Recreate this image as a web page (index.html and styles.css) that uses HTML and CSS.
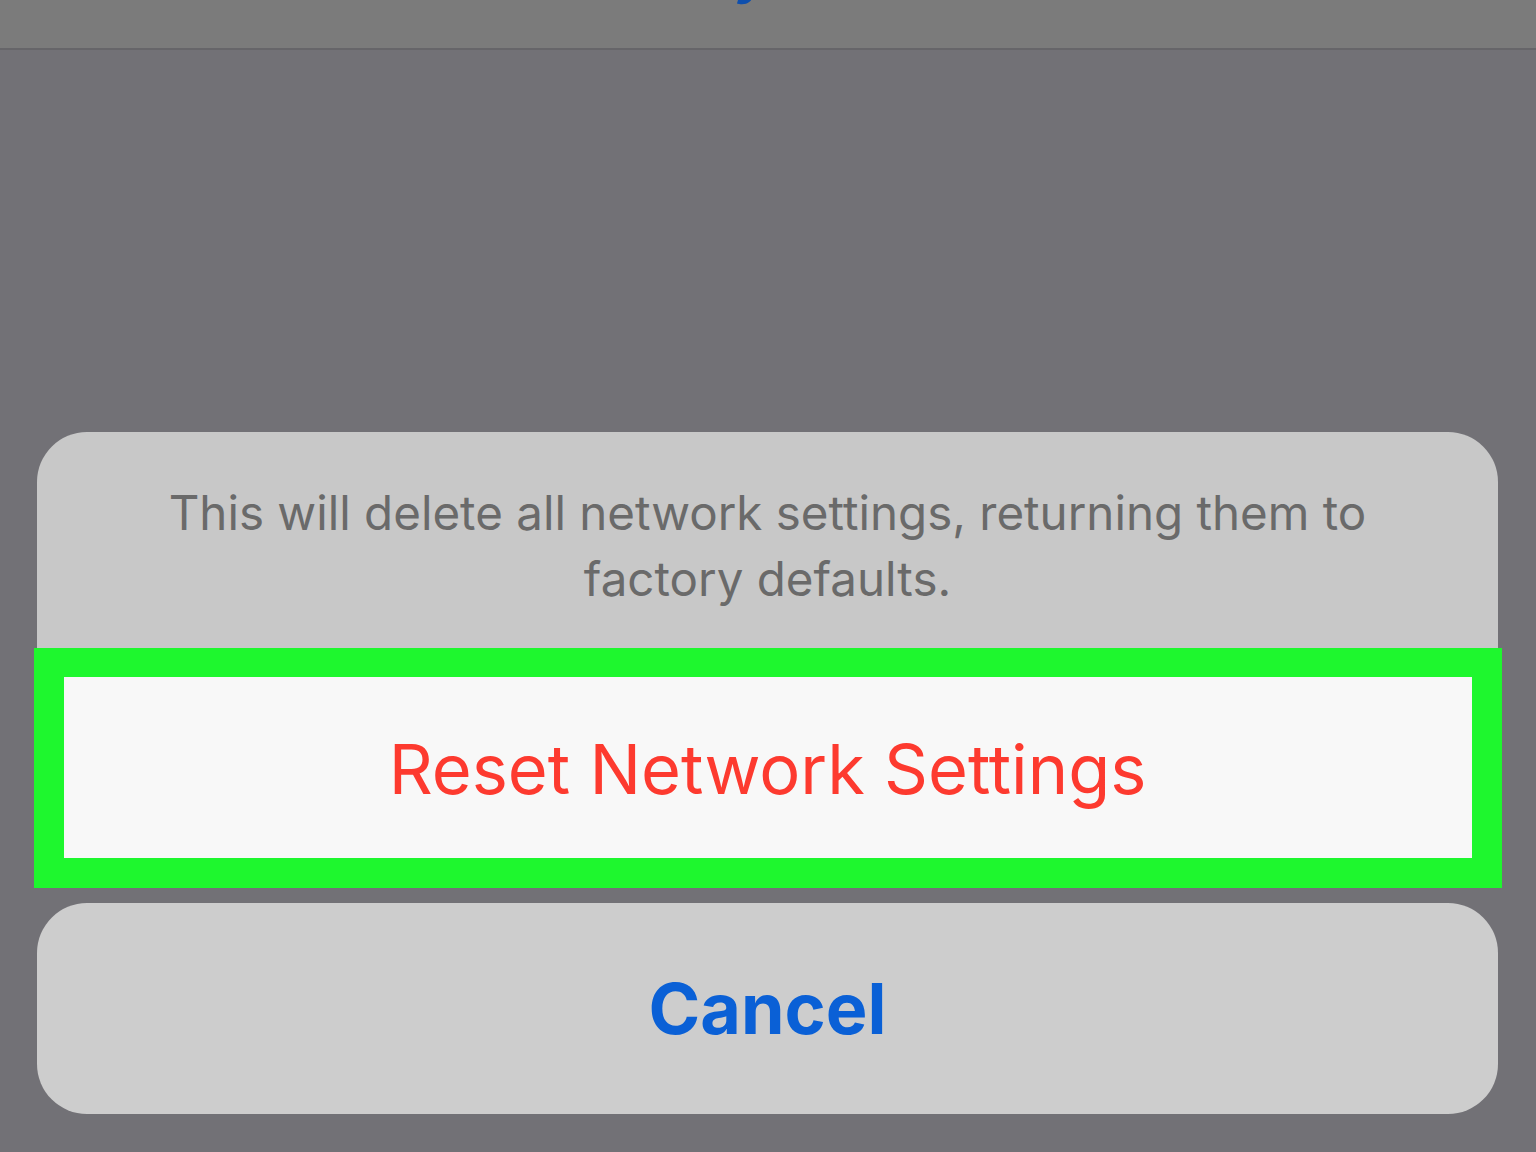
FILE: index.html
```html
<!DOCTYPE html>
<html lang="en">
<head>
<meta charset="utf-8">
<title>Reset Network Settings</title>
<link rel="stylesheet" href="styles.css">
</head>
<body>
<div class="screen">
  <header class="topbar">
    <span class="topbar-title">y</span>
  </header>

  <div class="dim-area"></div>

  <div class="action-sheet">
    <div class="sheet-group">
      <p class="sheet-message">This will delete all network settings, returning them to factory defaults.</p>
      <div class="sheet-action">
        <span class="action-label destructive">Reset Network Settings</span>
        <span class="highlight-frame"></span>
      </div>
    </div>

    <div class="sheet-cancel">
      <span class="action-label cancel">Cancel</span>
    </div>
  </div>
</div>
</body>
</html>
```

FILE: styles.css
```css
html, body {
  margin: 0;
  padding: 0;
}

body {
  background: #727176;
  font-family: Inter, "Noto Sans", "Liberation Sans", sans-serif;
}

.screen {
  width: 1536px;
  height: 1152px;
  display: flex;
  flex-direction: column;
  overflow: hidden;
}

/* dimmed navigation bar behind the sheet */
.topbar {
  height: 48px;
  flex: none;
  background: #7b7b7b;
  border-bottom: 2px solid #666569;
  display: flex;
  justify-content: center;
  overflow: hidden;
}

.topbar-title {
  display: block;
  font-size: 60px;
  line-height: 60px;
  margin-top: -60px;
  margin-left: -34px;
  color: #0e4fae;
  font-weight: 600;
}

.dim-area {
  height: 382px;
  flex: none;
}

.action-sheet {
  display: flex;
  flex-direction: column;
  gap: 15px;
  padding: 0 38px 0 37px;
}

.sheet-group {
  background: #c8c8c8;
  border-radius: 50px;
  display: flex;
  flex-direction: column;
}

.sheet-message {
  margin: 0;
  height: 216px;
  box-sizing: border-box;
  padding: 48px 115px 0;
  text-align: center;
  font-size: 47.5px;
  line-height: 66px;
  color: #6a6a6a;
}

.sheet-action {
  position: relative;
  height: 240px;
  background: #f8f8f8;
  border-radius: 0 0 50px 50px;
  display: flex;
  align-items: center;
  justify-content: center;
}

.action-label {
  display: block;
}

.destructive {
  font-size: 68.5px;
  color: #fd3a2f;
  margin-top: 2px;
}

/* green emphasis frame drawn over the destructive button */
.highlight-frame {
  position: absolute;
  top: 0;
  bottom: 0;
  left: -3px;
  right: -4px;
  border: 30px solid #1ef72e;
  border-top-width: 29px;
}

.sheet-cancel {
  height: 211px;
  background: #cdcdcd;
  border-radius: 50px;
  display: flex;
  align-items: center;
  justify-content: center;
}

.cancel {
  font-size: 70px;
  font-weight: 700;
  color: #0a60d6;
}
```
